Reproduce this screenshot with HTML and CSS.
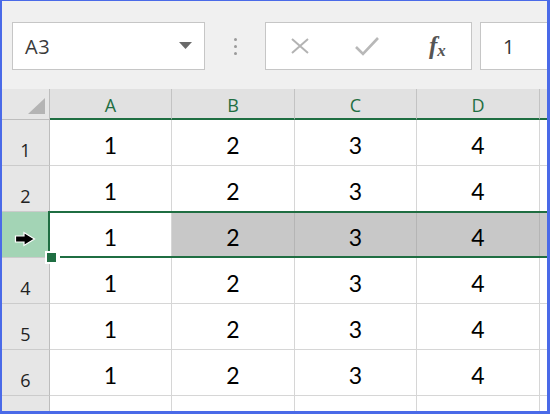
FILE: index.html
```html
<!DOCTYPE html>
<html>
<head>
<meta charset="utf-8">
<link rel="stylesheet" href="styles.css">
</head>
<body>
<div class="frame">
  <div class="toolbar">
    <div class="namebox">
      <span class="ref">A3</span>
      <svg class="caret" width="13" height="7" viewBox="0 0 13 7"><path d="M0 0H13L6.5 7Z" fill="#6a6a6a"/></svg>
    </div>
    <div class="dots"><i></i><i></i><i></i></div>
    <div class="fxbox">
      <div class="slot"><svg width="22" height="16" viewBox="0 0 22 16"><path d="M3 1L19 15M19 1L3 15" stroke="#b3b3b3" stroke-width="2" fill="none"/></svg></div>
      <div class="slot"><svg width="26" height="20" viewBox="0 0 26 20"><path d="M2 11L9 18L24 2" stroke="#b8b8b8" stroke-width="2.6" fill="none"/></svg></div>
      <div class="slot"><span class="fx">f<sub>x</sub></span></div>
    </div>
    <div class="formula">1</div>
  </div>
  <div class="sheet">
    <div class="grid">
      <div class="corner"><svg width="17" height="16" viewBox="0 0 17 16"><path d="M17 0V16H0Z" fill="#b4b4b4"/></svg></div>
      <div class="colh">A</div><div class="colh">B</div><div class="colh">C</div><div class="colh">D</div><div class="colh last"></div>

      <div class="rowh">1</div><div class="cell">1</div><div class="cell">2</div><div class="cell">3</div><div class="cell">4</div><div class="cell last"></div>
      <div class="rowh">2</div><div class="cell">1</div><div class="cell">2</div><div class="cell">3</div><div class="cell">4</div><div class="cell last"></div>
      <div class="rowh selh"><svg width="22" height="16" viewBox="0 0 22 16"><path d="M1.5 5H10V1.5L20.5 8L10 14.5V11H1.5Z" fill="#000" stroke="#fff" stroke-width="1.2"/></svg></div><div class="cell">1</div><div class="cell hi">2</div><div class="cell hi">3</div><div class="cell hi">4</div><div class="cell hi last"></div>
      <div class="rowh">4</div><div class="cell">1</div><div class="cell">2</div><div class="cell">3</div><div class="cell">4</div><div class="cell last"></div>
      <div class="rowh">5</div><div class="cell">1</div><div class="cell">2</div><div class="cell">3</div><div class="cell">4</div><div class="cell last"></div>
      <div class="rowh">6</div><div class="cell">1</div><div class="cell">2</div><div class="cell">3</div><div class="cell">4</div><div class="cell last"></div>
      <div class="rowh"></div><div class="cell"></div><div class="cell"></div><div class="cell"></div><div class="cell"></div><div class="cell last"></div>
    </div>
    <div class="sel"></div>
    <div class="handle"></div>
  </div>
</div>
</body>
</html>
```

FILE: styles.css
```css
html, body {
  margin: 0;
  padding: 0;
  background: #ffffff;
}
.frame {
  width: 550px;
  height: 414px;
  box-sizing: border-box;
  border-style: solid;
  border-color: #4a6ae8;
  border-width: 1px 3px 3px 2px;
  display: flex;
  flex-direction: column;
  overflow: hidden;
  font-family: "Open Sans", "Liberation Sans", sans-serif;
}
.toolbar {
  height: 88px;
  flex: none;
  background: #f0f0f0;
  display: flex;
  align-items: flex-start;
  padding: 21px 0 0 10px;
  box-sizing: border-box;
  overflow: hidden;
}
.namebox {
  width: 193px;
  height: 48px;
  box-sizing: border-box;
  border: 1px solid #c6c6c6;
  background: #fff;
  display: flex;
  align-items: center;
  justify-content: space-between;
  padding: 0 12px 0 12px;
  flex: none;
}
.ref {
  font-size: 20px;
  color: #3a3a3a;
  letter-spacing: 0.5px;
}
.caret {
  margin-top: -2px;
}
.dots {
  width: 60px;
  height: 48px;
  flex: none;
  display: flex;
  flex-direction: column;
  align-items: center;
  justify-content: center;
  gap: 4px;
}
.dots i {
  width: 3px;
  height: 3px;
  border-radius: 50%;
  background: #9a9a9a;
}
.fxbox {
  width: 207px;
  height: 48px;
  flex: none;
  box-sizing: border-box;
  border: 1px solid #c6c6c6;
  background: #fff;
  display: flex;
}
.slot {
  width: 69px;
  display: flex;
  align-items: center;
  justify-content: center;
}
.slot:nth-child(3) {
  padding-left: 3px;
}
.fx {
  font-family: "Liberation Serif", "DejaVu Serif", serif;
  font-style: italic;
  font-weight: bold;
  font-size: 25px;
  color: #555;
  line-height: 1;
}
.fx sub {
  font-size: 17px;
  vertical-align: -2px;
}
.formula {
  margin-left: 8px;
  width: 100px;
  height: 48px;
  flex: none;
  box-sizing: border-box;
  border: 1px solid #c6c6c6;
  border-right: none;
  background: #fff;
  font-size: 20px;
  color: #333;
  display: flex;
  align-items: center;
  padding-left: 22px;
}
.sheet {
  flex: 1;
  position: relative;
  overflow: hidden;
}
.grid {
  display: grid;
  grid-template-columns: 48px 122px 123px 122px 123px 1fr;
  grid-template-rows: 31px repeat(7, 46px);
}
.corner {
  background: #e6e6e6;
  border-right: 1px solid #bdbdbd;
  border-bottom: 1px solid #bdbdbd;
  box-sizing: border-box;
  display: flex;
  align-items: flex-end;
  justify-content: flex-end;
  padding: 0 4px 5px 0;
}
.colh {
  background: #e1e1e1;
  border-right: 1px solid #c3c3c3;
  border-bottom: 2px solid #1f6e42;
  box-sizing: border-box;
  display: flex;
  align-items: center;
  justify-content: center;
  font-size: 18px;
  color: #1f6e42;
  padding-top: 2px;
}
.colh.last {
  border-right: none;
}
.rowh {
  background: #e6e6e6;
  border-right: 1px solid #bdbdbd;
  border-bottom: 1px solid #cbcbcb;
  box-sizing: border-box;
  display: flex;
  align-items: flex-end;
  justify-content: center;
  padding-bottom: 3px;
  font-size: 18px;
  color: #222;
}
.rowh.selh {
  background: #a3d4b5;
  align-items: center;
  padding: 8px 0 0 0;
  justify-content: flex-start;
  padding-left: 12px;
}
.cell {
  border-right: 1px solid #d6d6d6;
  border-bottom: 1px solid #d6d6d6;
  box-sizing: border-box;
  display: flex;
  align-items: flex-end;
  justify-content: center;
  padding-bottom: 6px;
  font-family: "Lato", "Open Sans", sans-serif;
  font-size: 23px;
  color: #000;
}
.cell.last {
  border-right: none;
}
.cell.hi {
  background: #c8c8c8;
  border-right-color: #b5b5b5;
}
.sel {
  position: absolute;
  left: 46px;
  top: 122px;
  right: -10px;
  height: 47px;
  border: 2px solid #1f6e42;
  border-right: none;
  box-sizing: border-box;
}
.handle {
  position: absolute;
  left: 45px;
  top: 164px;
  width: 9px;
  height: 9px;
  background: #1f6e42;
  outline: 2px solid #fff;
  box-shadow: 6px 0 0 -2px #fff;
}
```
